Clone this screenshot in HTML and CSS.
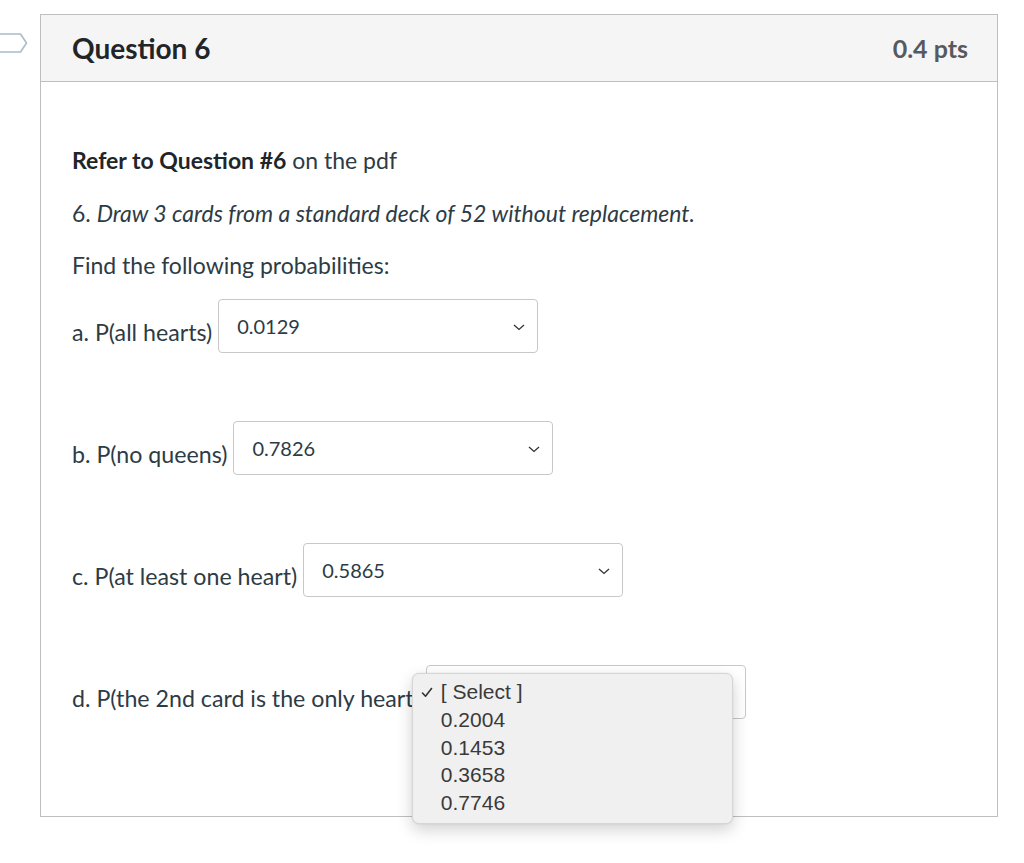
FILE: index.html
```html
<!DOCTYPE html>
<html lang="en">
<head>
<meta charset="utf-8">
<title>Question 6</title>
<link rel="stylesheet" href="styles.css">
</head>
<body>
<div class="page">
  <div class="flag-col">
    <svg class="flag" width="30" height="22" viewBox="0 0 30 22">
      <path d="M-4 2 H20.5 L26.5 11 L20.5 20 H-4" fill="none" stroke="#a9bccc" stroke-width="1.6" stroke-linejoin="round"/>
    </svg>
  </div>
  <div class="card">
    <div class="card-header">
      <h2 class="title">Question 6</h2>
      <span class="pts">0.4 pts</span>
    </div>
    <div class="card-body">
      <p class="para"><strong>Refer to Question #6</strong> on the pdf</p>
      <p class="para">6. <em>Draw 3 cards from a standard deck of 52 without replacement.</em></p>
      <p class="para last">Find the following probabilities:</p>

      <div class="rows">
        <div class="row">
          <span class="label">a. P(all hearts)</span>
          <div class="select">
            <span class="value">0.0129</span>
            <svg class="chev" width="12" height="7" viewBox="0 0 12 7"><path d="M1 1 L6 5.5 L11 1" fill="none" stroke="#333" stroke-width="1.3"/></svg>
          </div>
        </div>
        <div class="row">
          <span class="label">b. P(no queens)</span>
          <div class="select">
            <span class="value">0.7826</span>
            <svg class="chev" width="12" height="7" viewBox="0 0 12 7"><path d="M1 1 L6 5.5 L11 1" fill="none" stroke="#333" stroke-width="1.3"/></svg>
          </div>
        </div>
        <div class="row">
          <span class="label">c. P(at least one heart)</span>
          <div class="select">
            <span class="value">0.5865</span>
            <svg class="chev" width="12" height="7" viewBox="0 0 12 7"><path d="M1 1 L6 5.5 L11 1" fill="none" stroke="#333" stroke-width="1.3"/></svg>
          </div>
        </div>
        <div class="row">
          <span class="label">d. P(the 2nd card is the only heart)</span>
          <div class="select open">
            <span class="value"></span>
            <svg class="chev" width="12" height="7" viewBox="0 0 12 7"><path d="M1 1 L6 5.5 L11 1" fill="none" stroke="#333" stroke-width="1.3"/></svg>
            <ul class="menu">
              <li class="opt checked"><svg class="check" width="12" height="11" viewBox="0 0 12 11"><path d="M1.5 6 L4.5 9.2 L10.5 1.5" fill="none" stroke="#333" stroke-width="1.6" stroke-linecap="round" stroke-linejoin="round"/></svg>[ Select ]</li>
              <li class="opt">0.2004</li>
              <li class="opt">0.1453</li>
              <li class="opt">0.3658</li>
              <li class="opt">0.7746</li>
            </ul>
          </div>
        </div>
      </div>
    </div>
  </div>
</div>
</body>
</html>
```
FILE: styles.css
```css
html, body {
  margin: 0;
  padding: 0;
  background: #ffffff;
}

body {
  font-family: Lato, "Noto Sans", sans-serif;
  color: #2d3b45;
}

.page {
  display: flex;
  align-items: flex-start;
  padding-top: 14px;
  padding-bottom: 40px;
  width: 998px;
}

.flag-col {
  width: 40px;
  flex: 0 0 40px;
  padding-top: 18px;
}

.flag {
  display: block;
}

.card {
  position: relative;
  flex: 1;
  border: 1px solid #bfbfbf;
  box-sizing: border-box;
  height: 803px;
}

.card-header {
  display: flex;
  align-items: center;
  justify-content: space-between;
  height: 66px;
  padding: 0 29px 0 31px;
  background: #f5f5f5;
  border-bottom: 1px solid #bfbfbf;
}

.title {
  margin: 0;
  font-size: 28px;
  font-weight: 700;
  color: #1f2529;
}

.pts {
  font-size: 25px;
  font-weight: 700;
  color: #565a5e;
}

.card-body {
  padding: 63px 31px 0 31px;
}

.para {
  margin: 0 0 22.5px 0;
  font-size: 23px;
  line-height: 30px;
  color: #2d3b45;
}

.para strong {
  font-weight: 700;
  color: #1f2529;
}

.para.last {
  margin-bottom: 19px;
}

.rows {
  display: flex;
  flex-direction: column;
  gap: 68px;
}

.row {
  display: flex;
  align-items: center;
}

.label {
  font-size: 23.2px;
  line-height: 30px;
  padding-top: 12px;
  margin-right: 6px;
  white-space: nowrap;
  color: #2d3b45;
}

.select {
  position: relative;
  display: flex;
  align-items: center;
  justify-content: space-between;
  box-sizing: border-box;
  width: 320px;
  height: 54px;
  padding: 0 12px 0 18px;
  border: 1px solid #c8c8c8;
  border-radius: 4px;
  background: #fff;
}

.value {
  font-size: 20px;
  color: #2d3b45;
}

.chev {
  display: block;
  margin-top: 2px;
}

.menu {
  position: absolute;
  left: -15px;
  top: 7px;
  width: 321px;
  height: 151px;
  box-sizing: border-box;
  margin: 0;
  padding: 4px 0 0 28px;
  list-style: none;
  background: #f0f0f0;
  border: 1px solid #d6d6d6;
  border-radius: 7px;
  box-shadow: 0 6px 16px rgba(0, 0, 0, 0.18), 0 0 2px rgba(0, 0, 0, 0.1);
  z-index: 10;
}

.opt {
  position: relative;
  font-family: "Liberation Sans", Arial, sans-serif;
  font-size: 21px;
  line-height: 27.75px;
  color: #3a3a3a;
}

.check {
  position: absolute;
  left: -20px;
  top: 9px;
}
```
